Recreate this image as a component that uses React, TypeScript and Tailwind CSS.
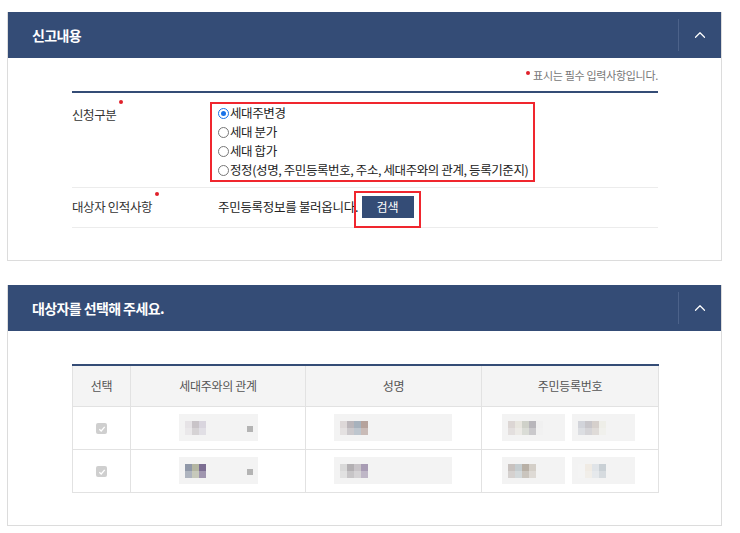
import { ChevronUp } from "lucide-react";

const font = "font-['Noto_Sans_CJK_KR','Noto_Sans',sans-serif]";

function PanelHeader({ title }: { title: string }) {
  return (
    <div className="flex h-[46px] items-center bg-[#344c76]">
      <h2 className="flex-1 pl-[24px] text-[14px] font-bold tracking-[-0.6px] text-white">{title}</h2>
      <div className="flex h-[32px] w-[43px] items-center justify-center border-l border-[#4c628a]">
        <ChevronUp size={18} color="#ffffff" strokeWidth={1.6} />
      </div>
    </div>
  );
}

function RequiredDot({ up = 12 }: { up?: number }) {
  return (
    <span
      className="ml-[3px] inline-block h-[4px] w-[4px] rounded-full bg-[#e0202a] align-top"
      style={{ transform: `translateY(-${up}px)` }}
    />
  );
}

const options = [
  "세대주변경",
  "세대 분가",
  "세대 합가",
  "정정(성명, 주민등록번호, 주소, 세대주와의 관계, 등록기준지)",
];

// blurred cell mosaics
type Tile = { c: string };
function Mosaic({ w, tiles, tail }: { w: number; tiles: Tile[]; tail?: string }) {
  return (
    <div className="relative flex h-[27px] items-center bg-[#f3f3f3] px-[6px]" style={{ width: w }}>
      <div className="flex">
        {tiles.map((t, i) => (
          <div key={i} className="flex flex-col">
            <div className="h-[7px] w-[7px]" style={{ background: t.c }} />
            <div className="h-[7px] w-[7px]" style={{ background: t.c, opacity: 0.7 }} />
          </div>
        ))}
      </div>
      {tail && <div className="absolute right-[5px] top-[12px] h-[6px] w-[6px]" style={{ background: tail }} />}
    </div>
  );
}

function CheckBox() {
  return (
    <span className="inline-flex h-[11px] w-[11px] items-center justify-center rounded-[2px] bg-[#cfcfcf]">
      <svg width="8" height="8" viewBox="0 0 8 8">
        <path d="M1.3 4.2 3.2 6 6.7 1.9" fill="none" stroke="#fff" strokeWidth="1.3" />
      </svg>
    </span>
  );
}

const rows = [
  {
    rel: [{ c: "#e6e3e6" }, { c: "#c9c4c8" }, { c: "#d9d5de" }],
    relTail: "#b4b4b4",
    name: [{ c: "#ddd8d8" }, { c: "#bbb6ba" }, { c: "#a7b2bd" }, { c: "#b6a39c" }],
    id1: [{ c: "#dcd6d4" }, { c: "#e8e6df" }, { c: "#cfd1c9" }, { c: "#b8b6bb" }, { c: "#f0f0f0" }],
    id2: [{ c: "#d2d4da" }, { c: "#c8c6ca" }, { c: "#d6d0cc" }, { c: "#eeeee8" }],
  },
  {
    rel: [{ c: "#9098a8" }, { c: "#b4b6a2" }, { c: "#7c6e92" }],
    relTail: "#b4b4b4",
    name: [{ c: "#d9d9d9" }, { c: "#b3b0b3" }, { c: "#c8c4c8" }, { c: "#a89cb4" }],
    id1: [{ c: "#c8c2bf" }, { c: "#c5cdd0" }, { c: "#b8b0a6" }, { c: "#d4cfc8" }],
    id2: [{ c: "#f4f4f4" }, { c: "#f0ebe4" }, { c: "#e0e4e8" }, { c: "#c9d0d5" }],
  },
];

export default function App() {
  return (
    <div className={`${font} h-[533px] w-[740px] bg-white pt-[12px] pl-[7px] text-[#333]`}>
      {/* 신고내용 */}
      <section className="w-[715px] border border-t-0 border-[#dcdcdc]">
        <PanelHeader title="신고내용" />
        <div className="h-[202px] pl-[64px]">
          <div className="w-[586px]">
            <p className="flex h-[33px] items-end justify-end pb-[8px] text-[11px] tracking-[-0.3px] text-[#777]">
              <span className="mr-[3px] inline-block h-[4px] w-[4px] -translate-y-[8px] rounded-full bg-[#e0202a]" />
              표시는 필수 입력사항입니다.
            </p>
            <div className="h-[2px] bg-[#344c76]" />
            <div className="flex border-b border-[#ececec] pt-[9px] pb-[5px]">
              <div className="w-[138px] pt-[4px] text-[12.5px] tracking-[-0.4px]">
                신청구분
                <RequiredDot up={6} />
              </div>
              <div className="w-[325px] border-2 border-[#f0262e] pl-[6px] text-[12.5px] tracking-[-0.4px] text-[#222]">
                {options.map((o, i) => (
                  <label key={o} className="flex h-[19px] items-center">
                    <span
                      className={`mr-[1px] inline-block h-[11px] w-[11px] rounded-full border ${
                        i === 0 ? "border-[#1a73e8] bg-white p-[2px]" : "border-[#777]"
                      }`}
                    >
                      {i === 0 && <span className="block h-full w-full rounded-full bg-[#1a73e8]" />}
                    </span>
                    {o}
                  </label>
                ))}
              </div>
            </div>
            <div className="flex h-[40px] items-center border-b border-[#ececec]">
              <div className="w-[146px] text-[12.5px] tracking-[-0.4px]">
                대상자 인적사항
                <RequiredDot up={6} />
              </div>
              <span className="text-[12.5px] tracking-[-0.3px] text-[#222]">주민등록정보를 불러옵니다.</span>
              <div className="ml-[-4px] mt-[3px] flex h-[37px] w-[67px] items-center justify-center border-2 border-[#f0262e]">
                <button className="mb-[4px] h-[22px] w-[52px] bg-[#344c76] text-[12px] text-white">검색</button>
              </div>
            </div>
          </div>
        </div>
      </section>

      {/* 대상자 선택 */}
      <section className="mt-[24px] w-[715px] border border-t-0 border-[#dcdcdc]">
        <PanelHeader title="대상자를 선택해 주세요." />
        <div className="h-[194px] pl-[64px] pt-[33px]">
          <table className="w-[586px] table-fixed border-collapse border-t-2 border-t-[#344c76] text-[12px] tracking-[-0.3px] text-[#555]">
            <colgroup>
              <col className="w-[58px]" />
              <col className="w-[175px]" />
              <col className="w-[176px]" />
              <col className="w-[177px]" />
            </colgroup>
            <thead>
              <tr className="h-[41px] bg-[#f4f4f4]">
                {["선택", "세대주와의 관계", "성명", "주민등록번호"].map((h) => (
                  <th key={h} className="border border-t-0 border-[#e2e2e2] font-normal">
                    {h}
                  </th>
                ))}
              </tr>
            </thead>
            <tbody>
              {rows.map((r, i) => (
                <tr key={i} className="h-[43px]">
                  <td className="border border-[#e2e2e2] text-center">
                    <CheckBox />
                  </td>
                  <td className="border border-[#e2e2e2]">
                    <div className="flex justify-center">
                      <Mosaic w={79} tiles={r.rel} tail={r.relTail} />
                    </div>
                  </td>
                  <td className="border border-[#e2e2e2]">
                    <div className="flex pl-[28px]">
                      <Mosaic w={118} tiles={r.name} />
                    </div>
                  </td>
                  <td className="border border-[#e2e2e2]">
                    <div className="flex gap-[7px] pl-[20px]">
                      <Mosaic w={63} tiles={r.id1} />
                      <Mosaic w={63} tiles={r.id2} />
                    </div>
                  </td>
                </tr>
              ))}
            </tbody>
          </table>
        </div>
      </section>
    </div>
  );
}
